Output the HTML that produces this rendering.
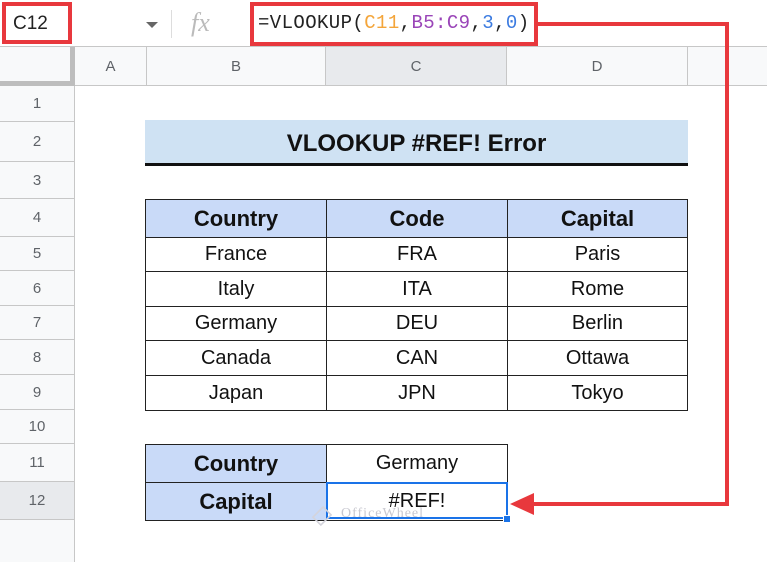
<!DOCTYPE html><html><head><style>
*{margin:0;padding:0;box-sizing:border-box}
body{width:767px;height:562px;overflow:hidden;background:#fff;font-family:"Liberation Sans",Arial,sans-serif;position:relative}
.a{position:absolute}
.rh{position:absolute;left:0;width:75px;background:#f8f9fa;border-bottom:1px solid #c7c7c7;border-right:1px solid #c7c7c7;color:#5f6368;font-size:15px;display:flex;align-items:center;justify-content:center}
.ch{position:absolute;top:47px;height:39px;background:#f8f9fa;border-right:1px solid #c7c7c7;border-bottom:1px solid #c7c7c7;color:#5f6368;font-size:15px;display:flex;align-items:center;justify-content:center}
.c{position:absolute;display:flex;align-items:center;justify-content:center;font-size:20px;color:#111;border:1.5px solid #222}
.h{background:#c9daf8;font-weight:bold;font-size:22px}
</style></head><body>
<div class="a" style="left:0;top:0;width:767px;height:47px;background:#fff;border-bottom:1px solid #c7c7c7"></div>
<div class="a" style="left:2px;top:2px;width:70px;height:42px;border:4px solid #e8383d"></div>
<div class="a" style="left:13px;top:13px;font-size:19px;color:#222">C12</div>
<div class="a" style="left:146px;top:22px;width:0;height:0;border-left:6px solid transparent;border-right:6px solid transparent;border-top:6px solid #666"></div>
<div class="a" style="left:171px;top:10px;width:1px;height:28px;background:#ddd"></div>
<div class="a" style="left:191px;top:8px;font-family:'Liberation Serif',serif;font-style:italic;font-size:26px;color:#bbb">fx</div>
<div class="a" style="left:250px;top:2px;width:288px;height:44px;border:4px solid #e8383d"></div>
<div class="a" style="left:258px;top:12px;font-family:'Liberation Mono',monospace;font-size:19px;letter-spacing:0.4px;color:#222">=VLOOKUP(<span style="color:#f4a53a">C11</span>,<span style="color:#9a45b8">B5:C9</span>,<span style="color:#3a7ae0">3</span>,<span style="color:#3a7ae0">0</span>)</div>
<div class="ch" style="left:0;width:75px;border-right:5px solid #bdbdbd;border-bottom:5px solid #bdbdbd"></div>
<div class="ch" style="left:75px;width:72px">A</div>
<div class="ch" style="left:147px;width:179px">B</div>
<div class="ch" style="left:326px;width:181px;background:#e8eaed">C</div>
<div class="ch" style="left:507px;width:181px">D</div>
<div class="ch" style="left:688px;width:79px;border-right:none"></div>
<div class="rh" style="top:86px;height:36px">1</div>
<div class="rh" style="top:122px;height:40px">2</div>
<div class="rh" style="top:162px;height:37px">3</div>
<div class="rh" style="top:199px;height:38px">4</div>
<div class="rh" style="top:237px;height:34px">5</div>
<div class="rh" style="top:271px;height:35px">6</div>
<div class="rh" style="top:306px;height:34px">7</div>
<div class="rh" style="top:340px;height:35px">8</div>
<div class="rh" style="top:375px;height:35px">9</div>
<div class="rh" style="top:410px;height:34px">10</div>
<div class="rh" style="top:444px;height:38px">11</div>
<div class="rh" style="top:482px;height:38px;background:#e8eaed">12</div>
<div class="rh" style="top:520px;height:42px;border-bottom:none"></div>
<div class="a" style="left:145px;top:120px;width:543px;height:46px;background:#cfe2f3;border-bottom:3px solid #111;display:flex;align-items:center;justify-content:center;padding-top:4px;font-weight:bold;font-size:24px;color:#111">VLOOKUP #REF! Error</div>
<div class="c h" style="left:145px;top:199px;width:182px;height:39px">Country</div>
<div class="c h" style="left:326px;top:199px;width:182px;height:39px">Code</div>
<div class="c h" style="left:507px;top:199px;width:181px;height:39px">Capital</div>
<div class="c" style="left:145px;top:237px;width:182px;height:35px">France</div>
<div class="c" style="left:326px;top:237px;width:182px;height:35px">FRA</div>
<div class="c" style="left:507px;top:237px;width:181px;height:35px">Paris</div>
<div class="c" style="left:145px;top:271px;width:182px;height:36px">Italy</div>
<div class="c" style="left:326px;top:271px;width:182px;height:36px">ITA</div>
<div class="c" style="left:507px;top:271px;width:181px;height:36px">Rome</div>
<div class="c" style="left:145px;top:306px;width:182px;height:35px">Germany</div>
<div class="c" style="left:326px;top:306px;width:182px;height:35px">DEU</div>
<div class="c" style="left:507px;top:306px;width:181px;height:35px">Berlin</div>
<div class="c" style="left:145px;top:340px;width:182px;height:36px">Canada</div>
<div class="c" style="left:326px;top:340px;width:182px;height:36px">CAN</div>
<div class="c" style="left:507px;top:340px;width:181px;height:36px">Ottawa</div>
<div class="c" style="left:145px;top:375px;width:182px;height:36px">Japan</div>
<div class="c" style="left:326px;top:375px;width:182px;height:36px">JPN</div>
<div class="c" style="left:507px;top:375px;width:181px;height:36px">Tokyo</div>
<div class="c h" style="left:145px;top:444px;width:182px;height:39px">Country</div>
<div class="c" style="left:326px;top:444px;width:182px;height:39px">Germany</div>
<div class="c h" style="left:145px;top:482px;width:182px;height:39px">Capital</div>
<div class="c" style="left:326px;top:482px;width:182px;height:39px">#REF!</div>
<div class="a" style="left:326px;top:482px;width:182px;height:37px;border:2px solid #1a73e8"></div>
<div class="a" style="left:503px;top:515px;width:8px;height:8px;background:#1a73e8;border:1px solid #fff"></div>
<div class="a" style="left:314px;top:506px;width:16px;height:20px;border:2px solid #d4d4dc;transform:rotate(45deg) scale(0.8)"></div>
<div class="a" style="left:341px;top:506px;font-family:'Liberation Serif',serif;font-size:14px;letter-spacing:1px;color:#c8c8d0">OfficeWheel</div>
<div class="a" style="left:538px;top:22px;width:191px;height:4px;background:#e8383d"></div>
<div class="a" style="left:725px;top:22px;width:4px;height:484px;background:#e8383d"></div>
<div class="a" style="left:528px;top:502px;width:201px;height:4px;background:#e8383d"></div>
<div class="a" style="left:510px;top:493px;width:0;height:0;border-top:11px solid transparent;border-bottom:11px solid transparent;border-right:24px solid #e8383d"></div>
</body></html>
